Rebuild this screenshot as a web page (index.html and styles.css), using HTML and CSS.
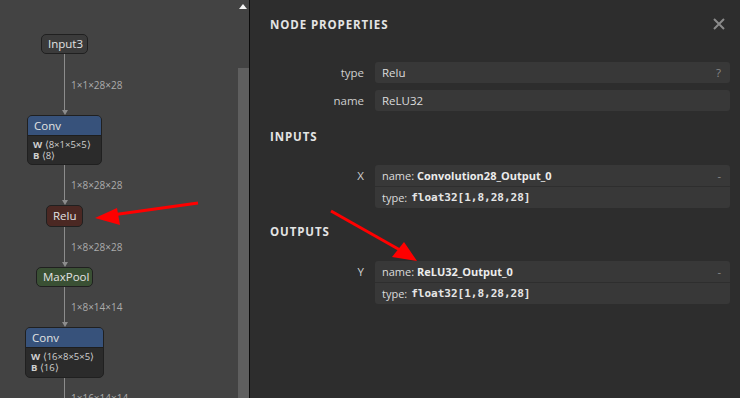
FILE: index.html
```html
<!DOCTYPE html>
<html>
<head>
<meta charset="utf-8">
<link rel="stylesheet" href="styles.css">
</head>
<body>
<div class="app">
  <div class="graph">
    <div class="chain">
      <div class="node plain">Input3</div>
      <div class="edge e1"><div class="wire"><span class="line"></span><span class="head"></span></div><span class="lbl">1×1×28×28</span></div>
      <div class="node op conv">
        <div class="op-title">Conv</div>
        <div class="op-body">
          <div><b>W</b> ⟨8×1×5×5⟩</div>
          <div><b>B</b> ⟨8⟩</div>
        </div>
      </div>
      <div class="edge"><div class="wire"><span class="line"></span><span class="head"></span></div><span class="lbl">1×8×28×28</span></div>
      <div class="node relu">Relu</div>
      <div class="edge"><div class="wire"><span class="line"></span><span class="head"></span></div><span class="lbl">1×8×28×28</span></div>
      <div class="node pool">MaxPool</div>
      <div class="edge"><div class="wire"><span class="line"></span><span class="head"></span></div><span class="lbl">1×8×14×14</span></div>
      <div class="node op conv2">
        <div class="op-title">Conv</div>
        <div class="op-body">
          <div><b>W</b> ⟨16×8×5×5⟩</div>
          <div><b>B</b> ⟨16⟩</div>
        </div>
      </div>
      <div class="edge"><div class="wire"><span class="line"></span></div><span class="lbl">1×16×14×14</span></div>
    </div>
  </div>
  <div class="scroll">
    <div class="up"></div>
    <div class="thumb"></div>
  </div>
  <div class="divider"></div>
  <div class="props">
    <div class="head-row">
      <div class="title">NODE PROPERTIES</div>
      <svg class="close" width="12" height="12" viewBox="0 0 12 12"><path d="M1 1L11 11M11 1L1 11" stroke="#8a8a8a" stroke-width="2"/></svg>
    </div>
    <div class="attrs">
      <div class="key">type</div>
      <div class="val"><span>Relu</span><span class="q">?</span></div>
      <div class="key">name</div>
      <div class="val"><span>ReLU32</span></div>
    </div>
    <div class="section">INPUTS</div>
    <div class="attrs io">
      <div class="key">X</div>
      <div class="box">
        <div class="brow"><span>name: <b>Convolution28_Output_0</b></span><span class="dash">-</span></div>
        <div class="brow">type: <code>float32[1,8,28,28]</code></div>
      </div>
    </div>
    <div class="section out">OUTPUTS</div>
    <div class="attrs io io2">
      <div class="key">Y</div>
      <div class="box">
        <div class="brow"><span>name: <b>ReLU32_Output_0</b></span><span class="dash">-</span></div>
        <div class="brow">type: <code>float32[1,8,28,28]</code></div>
      </div>
    </div>
  </div>
</div>
<svg class="annot" width="740" height="398" viewBox="0 0 740 398">
  <line x1="198" y1="203" x2="112" y2="215" stroke="#ff0000" stroke-width="3"/>
  <polygon points="95,218 117,208 120,225" fill="#ff0000"/>
  <line x1="331" y1="211" x2="400" y2="250" stroke="#ff0000" stroke-width="3"/>
  <polygon points="417,261 392,257 404,242" fill="#ff0000"/>
</svg>
</body>
</html>
```
FILE: styles.css
```css
* { box-sizing: border-box; }
html, body { margin: 0; padding: 0; }
body {
  width: 740px;
  height: 398px;
  overflow: hidden;
  font-family: "Open Sans", "Noto Sans", sans-serif;
  font-size: 11px;
  color: #dcdcdc;
  background: #2d2d2d;
}
.app {
  display: flex;
  height: 398px;
}
.graph {
  width: 237px;
  background: #434343;
  padding-top: 34px;
  overflow: hidden;
}
.chain {
  width: 129px;
  display: flex;
  flex-direction: column;
  align-items: center;
}
.node {
  border: 1px solid #202020;
  border-radius: 5px;
  color: #e2e2e2;
  font-size: 11.5px;
  line-height: 18px;
  padding: 0 6px;
  text-align: center;
}
.plain { background: #3b3b3b; width: 47px; height: 20px; }
.relu { background: #4b2823; width: 37px; height: 22px; line-height: 20px; }
.pool { background: #3a5034; width: 57px; height: 20px; }
.op {
  background: #2b2b2b;
  padding: 0;
  text-align: left;
  overflow: hidden;
}
.conv { width: 75px; height: 50px; }
.conv2 { width: 79px; height: 51px; }
.op-title {
  background: #37527b;
  height: 20px;
  line-height: 19px;
  padding-left: 6px;
  border-bottom: 1px solid #1e1e1e;
}
.op-body {
  padding: 3px 6px 0 5px;
  font-size: 9.5px;
  line-height: 11px;
  color: #cfcfcf;
  white-space: nowrap;
}
.op-body b { font-weight: 700; }
.edge {
  align-self: stretch;
  height: 40px;
  display: grid;
  grid-template-columns: 61px 7px 1fr;
  align-items: center;
}
.edge.e1 { height: 61px; }
.wire {
  grid-column: 2;
  height: 100%;
  display: flex;
  flex-direction: column;
  align-items: center;
}
.line {
  flex: 1;
  width: 1px;
  background: #8c8c8c;
}
.head {
  width: 0;
  height: 0;
  border-left: 3px solid transparent;
  border-right: 3px solid transparent;
  border-top: 5px solid #8c8c8c;
}
.lbl {
  grid-column: 3;
  padding-left: 3px;
  font-size: 10px;
  color: #ababab;
  white-space: nowrap;
}
.scroll {
  width: 12px;
  background: #434343;
  display: flex;
  flex-direction: column;
  align-items: center;
}
.up {
  margin-top: 4px;
  width: 0;
  height: 0;
  border-left: 4px solid transparent;
  border-right: 4px solid transparent;
  border-bottom: 5px solid #f4f4f4;
}
.thumb {
  margin-top: 59px;
  width: 11px;
  flex: 1;
  background: #5f5f5f;
}
.divider {
  width: 1px;
  background: #0b0b0b;
}
.props {
  flex: 1;
  padding: 0 10px 0 20px;
}
.head-row {
  height: 48px;
  display: flex;
  align-items: center;
  justify-content: space-between;
  padding-right: 5px;
}
.title, .section {
  font-weight: 700;
  font-size: 11.5px;
  letter-spacing: 0.9px;
  color: #e4e4e4;
}
.title { margin-top: 1px; }
.attrs {
  display: grid;
  grid-template-columns: 94px 1fr;
  column-gap: 11px;
  row-gap: 7px;
  margin-top: 14px;
}
.key {
  text-align: right;
  color: #cfcfcf;
  font-size: 11.5px;
  line-height: 21px;
}
.val {
  height: 21px;
  background: #383838;
  border-radius: 3px;
  padding: 0 9px 0 7px;
  display: flex;
  justify-content: space-between;
  align-items: center;
  font-size: 11.5px;
}
.q { color: #8a8a8a; }
.section {
  margin-top: 20px;
  height: 12px;
  line-height: 12px;
}
.section.out { margin-top: 18px; }
.io { margin-top: 22px; }
.io2 { margin-top: 23px; }
.io .key { line-height: 21px; }
.box {
  background: #383838;
  border-radius: 3px;
  font-size: 11px;
}
.brow {
  height: 21px;
  padding: 0 9px 0 7px;
  display: flex;
  align-items: center;
  justify-content: space-between;
}
.brow + .brow {
  height: 22px;
  border-top: 1px solid #2e2e2e;
  justify-content: flex-start;
  gap: 4px;
}
.brow b { font-weight: 700; color: #ececec; }
.dash { color: #8a8a8a; }
code {
  font-family: "DejaVu Sans Mono", monospace;
  font-weight: 700;
  font-size: 11px;
  color: #e6e6e6;
}
.annot {
  position: absolute;
  left: 0;
  top: 0;
  pointer-events: none;
}
```
